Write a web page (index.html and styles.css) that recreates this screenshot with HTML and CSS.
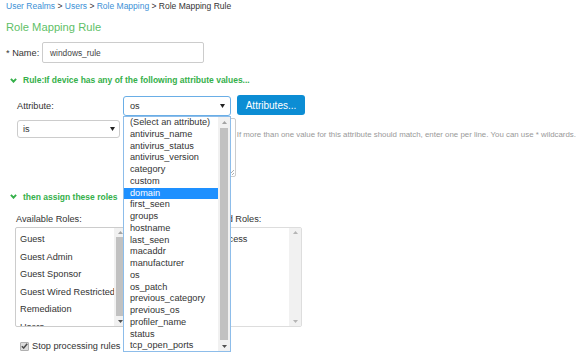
FILE: index.html
```html
<!DOCTYPE html>
<html>
<head>
<meta charset="utf-8">
<link rel="stylesheet" href="styles.css">
</head>
<body>
<div class="page">
  <div class="crumbs"><a class="crumb-link">User Realms</a> &gt; <a class="crumb-link">Users</a> &gt; <a class="crumb-link">Role Mapping</a> &gt; <span>Role Mapping Rule</span></div>
  <h1 class="title">Role Mapping Rule</h1>
  <div class="name-row">
    <span class="name-label">* Name:</span>
    <div class="input">windows_rule</div>
  </div>

  <div class="section-head">
    <svg class="chev" width="7" height="5" viewBox="0 0 7 5"><path d="M0.9 0.9 L3.5 3.7 L6.1 0.9" fill="none" stroke="#35b04a" stroke-width="1.9"/></svg>
    <span>Rule:If device has any of the following attribute values...</span>
  </div>

  <div class="attr-row">
    <span class="attr-label">Attribute:</span>
    <div class="select-wrap">
      <div class="select focus"><span>os</span><svg class="caret" width="5" height="4" viewBox="0 0 5 4"><path d="M0 0H5L2.5 4Z" fill="#222"/></svg></div>
      <div class="dropdown">
        <ul class="dd-list">
          <li class="dd-item">(Select an attribute)</li>
          <li class="dd-item">antivirus_name</li>
          <li class="dd-item">antivirus_status</li>
          <li class="dd-item">antivirus_version</li>
          <li class="dd-item">category</li>
          <li class="dd-item">custom</li>
          <li class="dd-item dd-active">domain</li>
          <li class="dd-item">first_seen</li>
          <li class="dd-item">groups</li>
          <li class="dd-item">hostname</li>
          <li class="dd-item">last_seen</li>
          <li class="dd-item">macaddr</li>
          <li class="dd-item">manufacturer</li>
          <li class="dd-item">os</li>
          <li class="dd-item">os_patch</li>
          <li class="dd-item">previous_category</li>
          <li class="dd-item">previous_os</li>
          <li class="dd-item">profiler_name</li>
          <li class="dd-item">status</li>
          <li class="dd-item">tcp_open_ports</li>
        </ul>
        <div class="sbar">
          <svg class="sarrow" width="5" height="3" viewBox="0 0 5 3"><path d="M0 3H5L2.5 0Z" fill="#a3a3a3"/></svg>
          <div class="thumb dd-thumb"></div>
          <svg class="sarrow" width="5" height="3" viewBox="0 0 5 3"><path d="M0 0H5L2.5 3Z" fill="#505050"/></svg>
        </div>
      </div>
    </div>
    <button class="btn">Attributes...</button>
  </div>

  <div class="cond-row">
    <div class="select small"><span>is</span><svg class="caret" width="5" height="4" viewBox="0 0 5 4"><path d="M0 0H5L2.5 4Z" fill="#222"/></svg></div>
    <div class="textarea"><svg class="grip" width="6" height="6" viewBox="0 0 6 6"><path d="M6 1L1 6M6 4L4 6" stroke="#999" stroke-width="0.8"/></svg></div>
    <div class="help">If more than one value for this attribute should match, enter one per line. You can use * wildcards.</div>
  </div>

  <div class="section-head second">
    <svg class="chev" width="7" height="5" viewBox="0 0 7 5"><path d="M0.9 0.9 L3.5 3.7 L6.1 0.9" fill="none" stroke="#35b04a" stroke-width="1.9"/></svg>
    <span>then assign these roles</span>
  </div>

  <div class="roles-row">
    <div class="roles-col left">
      <div class="roles-label">Available Roles:</div>
      <div class="listbox">
        <ul class="lb-items">
          <li class="lb-item">Guest</li>
          <li class="lb-item">Guest Admin</li>
          <li class="lb-item">Guest Sponsor</li>
          <li class="lb-item">Guest Wired Restricted</li>
          <li class="lb-item">Remediation</li>
          <li class="lb-item">Users</li>
        </ul>
        <div class="sbar lb-bar">
          <svg class="sarrow" width="5" height="3" viewBox="0 0 5 3"><path d="M0 3H5L2.5 0Z" fill="#a3a3a3"/></svg>
          <div class="thumb lb-thumb"></div>
          <svg class="sarrow" width="5" height="3" viewBox="0 0 5 3"><path d="M0 0H5L2.5 3Z" fill="#505050"/></svg>
        </div>
      </div>
    </div>
    <div class="roles-col right">
      <div class="roles-label">Selected Roles:</div>
      <div class="listbox light">
        <ul class="lb-items">
          <li class="lb-item">Full Access</li>
        </ul>
        <div class="sbar lb-bar">
          <svg class="sarrow" width="5" height="3" viewBox="0 0 5 3"><path d="M0 3H5L2.5 0Z" fill="#b5b5b5"/></svg>
          <div class="thumb empty"></div>
          <svg class="sarrow" width="5" height="3" viewBox="0 0 5 3"><path d="M0 0H5L2.5 3Z" fill="#b5b5b5"/></svg>
        </div>
      </div>
    </div>
  </div>

  <div class="check-row">
    <span class="checkbox"><svg width="7" height="6" viewBox="0 0 7 6"><path d="M0.8 3.2 L2.7 5 L6.2 0.8" fill="none" stroke="#4a4a4a" stroke-width="1.5"/></svg></span>
    <span class="check-label">Stop processing rules</span>
  </div>
</div>
</body>
</html>
```

FILE: styles.css
```css
* { box-sizing: border-box; }
html, body { margin: 0; padding: 0; background: #fff; }
body {
  font-family: "Liberation Sans", Arial, sans-serif;
  color: #333;
  font-size: 9.2px;
  overflow: hidden;
}
ul { list-style: none; margin: 0; padding: 0; }

.page { padding-left: 6px; }

.crumbs { font-size: 8.5px; line-height: 12px; white-space: nowrap; color: #333; }
.crumb-link { color: #3a90d6; text-decoration: none; }

.title {
  margin: 8px 0 0;
  font-size: 11.2px;
  line-height: 14px;
  font-weight: normal;
  color: #5fbf68;
}

.name-row { display: flex; align-items: center; margin-top: 8px; height: 21px; }
.name-label { width: 36px; font-size: 9.2px; }
.input {
  width: 162px; height: 21px;
  border: 1px solid #ccc; border-radius: 2px;
  padding-left: 7px;
  display: flex; align-items: center;
  font-size: 8.4px; color: #444;
}

.section-head {
  display: flex; align-items: center;
  margin-top: 11px;
  padding-left: 4px;
  height: 12px;
  font-size: 8.5px; font-weight: bold; color: #35b04a;
  white-space: nowrap;
}
.section-head.second { margin-top: 13.5px; }
.chev { margin-right: 6px; flex: none; }

.attr-row { display: flex; align-items: flex-start; margin-top: 9px; padding-left: 11px; height: 21px; }
.attr-label { width: 106px; line-height: 21px; padding-top: 1px; }
.select-wrap { position: relative; margin-top: 1px; z-index: 5; }
.select {
  display: flex; align-items: center; justify-content: space-between;
  width: 108px; height: 20px;
  border: 1px solid #ccc; border-radius: 3px;
  padding: 0 5px 0 6px;
  font-size: 9.2px; color: #333; background: #fff;
}
.select.focus { border-color: #6aaee6; }
.caret { flex: none; }

.btn {
  margin-left: 6px;
  width: 68px; height: 20px;
  border: none; border-radius: 3px;
  background: #0c8dd4; color: #fff;
  font-family: "Liberation Sans", Arial, sans-serif;
  font-size: 10px; padding: 0;
}

.dropdown {
  position: absolute; left: 0; top: 20px;
  width: 108px; height: 236px;
  border: 1px solid #8dbdea;
  background: #fff;
  display: flex;
}
.dd-list { flex: 1; }
.dd-item { height: 11.75px; line-height: 11.75px; padding-left: 6px; font-size: 9.2px; color: #333; white-space: nowrap; }
.dd-active { background: #1e90ff; color: #fff; }

.sbar {
  width: 12px; flex: none;
  background: #f1f1f1;
  display: flex; flex-direction: column; align-items: center;
  padding: 4px 0 3px;
}
.sarrow { flex: none; }
.thumb { width: 8px; background: #c1c1c1; flex: 1; margin: 4px 0 5px; }
.thumb.empty { background: transparent; }

.cond-row { display: flex; align-items: flex-start; margin-top: 2px; padding-left: 11px; height: 59px; }
.select.small { width: 103px; height: 18px; margin-top: 2px; padding-left: 5px; padding-right: 4px; }
.textarea {
  position: relative;
  margin-left: 3px;
  width: 113px; height: 59px;
  border: 1px solid #ccc; border-radius: 2px;
}
.grip { position: absolute; right: 1px; bottom: 1px; }
.help {
  margin-left: 1px; margin-top: 12px;
  font-size: 7.88px; line-height: 10px; color: #999; white-space: nowrap;
}

.roles-row { display: flex; margin-top: 10px; padding-left: 9px; }
.roles-col.left { width: 112px; }
.roles-col.right { width: 106px; margin-left: 69px; }
.roles-label { padding-left: 1px; line-height: 12px; height: 12px; margin-bottom: 2.6px; white-space: nowrap; }
.listbox {
  display: flex;
  height: 100px;
  border: 1px solid #ccc; border-radius: 2px;
  overflow: hidden;
}
.listbox.light { border-color: #ddd; }
.lb-items { flex: 1; padding: 3px 0 0 4px; overflow: hidden; }
.lb-item { height: 17.6px; line-height: 17.6px; white-space: nowrap; }
.lb-bar { padding: 3px 0 3px; }
.lb-thumb { margin: 3px 0 4px; }

.check-row { display: flex; align-items: center; margin-top: 13px; padding-left: 14px; height: 12px; }
.checkbox {
  width: 9px; height: 9px;
  border: 1px solid #b0b0b0; border-radius: 1px;
  background: #dcdcdc;
  display: flex; align-items: center; justify-content: center;
  margin-right: 3px;
}
.check-label { white-space: nowrap; }
```
